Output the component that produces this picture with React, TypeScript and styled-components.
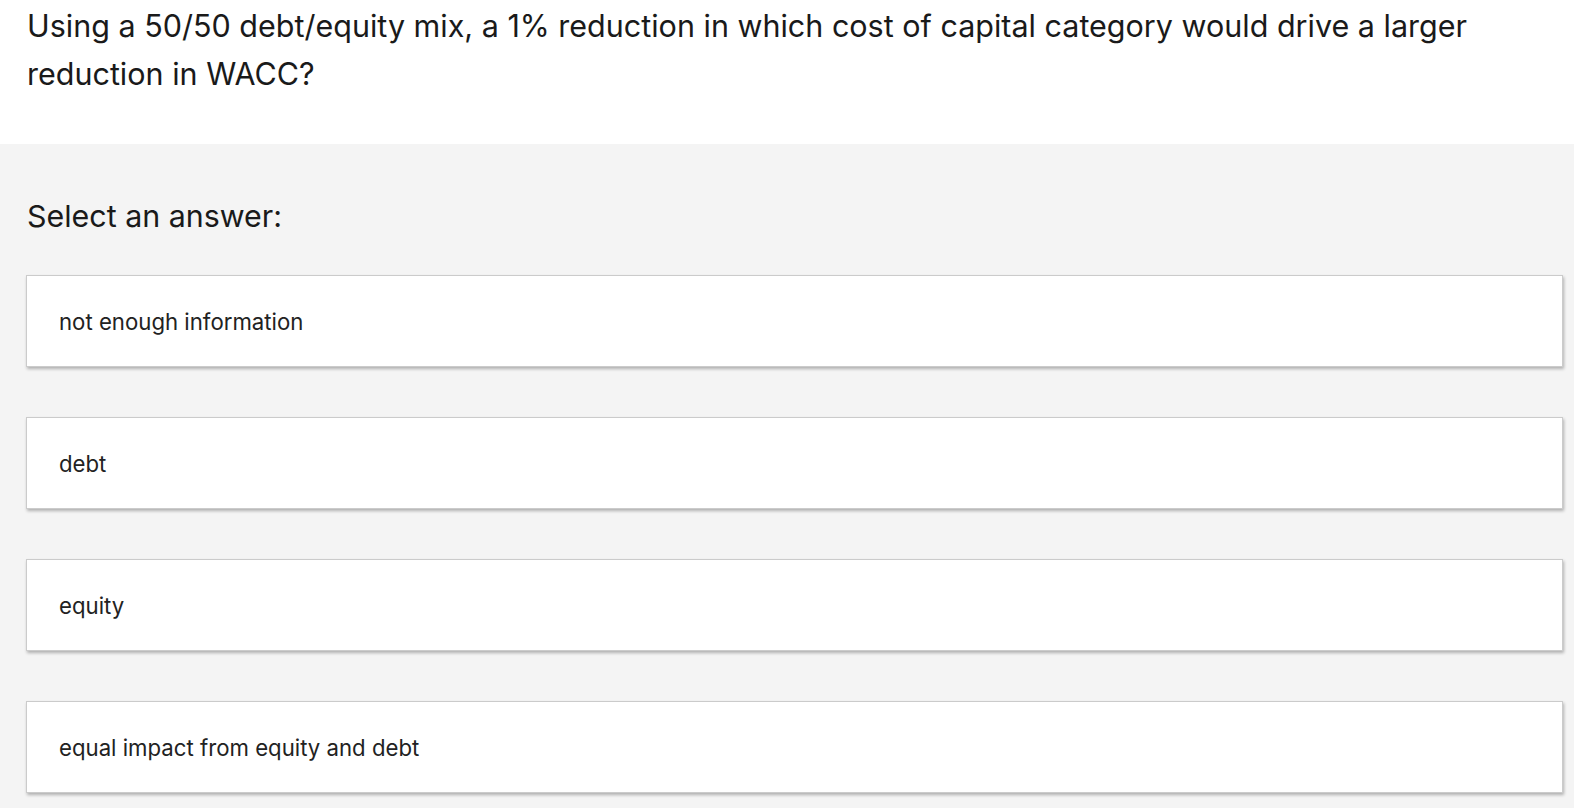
import React from 'react'
import styled, { createGlobalStyle } from 'styled-components'

const GlobalStyle = createGlobalStyle`
  html, body {
    margin: 0;
    padding: 0;
    background: #f4f4f4;
  }
  body {
    font-family: Inter, "Noto Sans", "Liberation Sans", sans-serif;
    color: #1d1d1f;
  }
  * {
    box-sizing: border-box;
  }
`

const Header = styled.header`
  background: #ffffff;
  height: 144px;
  padding: 2px 40px 0 27px;
`

const Question = styled.h1`
  margin: 0;
  font-size: 30.5px;
  font-weight: 400;
  line-height: 48px;
  color: #1a1a1a;
`

const Body = styled.section`
  padding: 50px 11px 16px 26px;
`

const Prompt = styled.h2`
  margin: 0 0 37px 1px;
  font-size: 30.4px;
  font-weight: 400;
  line-height: 44px;
  color: #1a1a1a;
`

const Options = styled.ul`
  list-style: none;
  margin: 0;
  padding: 0;
  display: flex;
  flex-direction: column;
  gap: 50px;
`

const Option = styled.li`
  display: flex;
  align-items: center;
  height: 92px;
  padding: 0 32px;
  background: #ffffff;
  border: 1px solid #cbcbcb;
  box-shadow: 1px 2px 3px rgba(0, 0, 0, 0.28);
  font-size: 22.2px;
  color: #222222;
  cursor: pointer;
`

const answers = [
  'not enough information',
  'debt',
  'equity',
  'equal impact from equity and debt',
]

export default function App() {
  return (
    <>
      <GlobalStyle />
      <Header>
        <Question>
          Using a 50/50 debt/equity mix, a 1% reduction in which cost of capital category would drive a larger
          reduction in WACC?
        </Question>
      </Header>
      <Body>
        <Prompt>Select an answer:</Prompt>
        <Options>
          {answers.map((a) => (
            <Option key={a}>{a}</Option>
          ))}
        </Options>
      </Body>
    </>
  )
}
